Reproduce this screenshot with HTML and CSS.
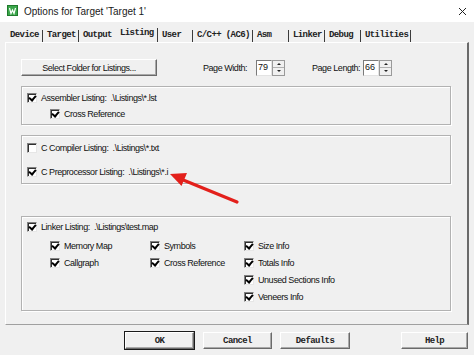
FILE: index.html
```html
<!DOCTYPE html>
<html>
<head>
<meta charset="utf-8">
<link rel="stylesheet" href="styles.css">
</head>
<body>
<div class="dialog">
  <div class="titlebar">
    <svg class="appicon" width="11" height="11" viewBox="0 0 11 11">
      <rect x="0" y="0" width="11" height="11" fill="#1f7a2c"/>
      <rect x="1" y="1" width="9" height="9" fill="#3aa64a"/>
      <polyline points="2.5,3 4,8.5 5.5,5 7,8.5 8.5,3" fill="none" stroke="#fff" stroke-width="1.2"/>
    </svg>
    <span class="title">Options for Target 'Target 1'</span>
    <svg class="close" width="9" height="9" viewBox="0 0 9 9">
      <path d="M1 1 L8 8 M8 1 L1 8" stroke="#222" stroke-width="1"/>
    </svg>
  </div>

  <div class="tabs">
    <span class="tab w-device">Device</span>
    <span class="tab w-target">Target</span>
    <span class="tab w-output nosep">Output</span>
    <span class="tab w-listing active">Listing</span>
    <span class="tab w-user">User</span>
    <span class="tab w-cc">C/C++ (AC6)</span>
    <span class="tab w-asm">Asm</span>
    <span class="tab w-linker">Linker</span>
    <span class="tab w-debug">Debug</span>
    <span class="tab w-util">Utilities</span>
  </div>

  <div class="panel">
    <div class="toprow">
      <button class="btn folder">Select Folder for Listings...</button>
      <span class="lbl lbl-pw">Page Width:</span>
      <div class="spin">
        <span class="field">79</span>
        <span class="spinbtns"><span class="sb"><i class="up"></i></span><span class="sb"><i class="down"></i></span></span>
      </div>
      <span class="lbl lbl-pl">Page Length:</span>
      <div class="spin">
        <span class="field">66</span>
        <span class="spinbtns"><span class="sb"><i class="up"></i></span><span class="sb"><i class="down"></i></span></span>
      </div>
    </div>

    <div class="group g1">
      <div class="cbrow"><span class="cb on"></span><span class="txt">Assembler Listing:  .\Listings\*.lst</span></div>
      <div class="cbrow sub"><span class="cb on"></span><span class="txt">Cross Reference</span></div>
    </div>

    <div class="group g2">
      <div class="cbrow"><span class="cb"></span><span class="txt">C Compiler Listing:  .\Listings\*.txt</span></div>
      <div class="cbrow"><span class="cb on"></span><span class="txt">C Preprocessor Listing:  .\Listings\*.i</span></div>
    </div>

    <div class="group g3">
      <div class="cbrow"><span class="cb on"></span><span class="txt">Linker Listing:  .\Listings\test.map</span></div>
      <div class="opts">
        <div class="cbrow"><span class="cb on"></span><span class="txt">Memory Map</span></div>
        <div class="cbrow"><span class="cb on"></span><span class="txt">Symbols</span></div>
        <div class="cbrow"><span class="cb on"></span><span class="txt">Size Info</span></div>
        <div class="cbrow"><span class="cb on"></span><span class="txt">Callgraph</span></div>
        <div class="cbrow"><span class="cb on"></span><span class="txt">Cross Reference</span></div>
        <div class="cbrow"><span class="cb on"></span><span class="txt">Totals Info</span></div>
        <div></div><div></div>
        <div class="cbrow"><span class="cb on"></span><span class="txt">Unused Sections Info</span></div>
        <div></div><div></div>
        <div class="cbrow"><span class="cb on"></span><span class="txt">Veneers Info</span></div>
      </div>
    </div>
  </div>

  <div class="buttons">
    <button class="btn mono ok">OK</button>
    <button class="btn mono cancel">Cancel</button>
    <button class="btn mono defaults">Defaults</button>
    <button class="btn mono help">Help</button>
  </div>

  <svg class="arrow" width="474" height="355" viewBox="0 0 474 355">
    <line x1="237" y1="202" x2="182" y2="179.5" stroke="#e3201b" stroke-width="3.2" stroke-linecap="round"/>
    <polygon points="170,174 187,173 181.5,186" fill="#e3201b"/>
  </svg>
</div>
</body>
</html>
```

FILE: styles.css
```css
html, body {
  margin: 0;
  padding: 0;
}
body {
  width: 474px;
  height: 355px;
  overflow: hidden;
  background: #f0f0f0;
}
.dialog {
  position: relative;
  width: 474px;
  height: 355px;
  background: #f0f0f0;
  font-family: "Liberation Sans", Arial, sans-serif;
  font-size: 9px;
  letter-spacing: -0.45px;
  color: #111;
}

/* title bar */
.titlebar {
  height: 22px;
  background: #fff;
  display: flex;
  align-items: center;
  padding-left: 7px;
  box-sizing: border-box;
}
.appicon { flex: none; margin-top: -1px; }
.title {
  margin-left: 6px;
  font-size: 10px;
  letter-spacing: 0;
  color: #1a1a1a;
}
.close {
  margin-left: auto;
  margin-right: 7px;
}

/* tabs */
.tabs {
  height: 20px;
  display: flex;
  align-items: flex-end;
  padding-left: 6px;
  box-sizing: border-box;
}
.tab {
  box-sizing: border-box;
  height: 12px;
  line-height: 11px;
  padding-left: 4px;
  border-right: 1px solid #3c3c3c;
  margin-bottom: 0;
  font-family: "Liberation Mono", "Courier New", monospace;
  font-size: 9px;
  letter-spacing: -0.6px;
  font-weight: bold;
  color: #222;
  white-space: pre;
}
.tab.nosep { border-right-color: transparent; }
.tab.active {
  height: 14px;
  line-height: 11px;
  padding-bottom: 3px;
}
.w-device { width: 37px; }
.w-target { width: 36px; }
.w-output { width: 37px; }
.w-listing { width: 42px; }
.w-user { width: 35px; }
.w-cc { width: 60px; }
.w-asm { width: 36px; }
.w-linker { width: 36px; }
.w-debug { width: 36px; }
.w-util { width: 50px; }

/* panel */
.panel {
  box-sizing: border-box;
  margin-left: 5px;
  width: 464px;
  height: 283px;
  border-top: 1px solid #fff;
  border-left: 1px solid #fff;
  border-right: 2px solid #6a6a6a;
  border-bottom: 1px solid #a0a0a0;
  padding: 16px 0 0 15px;
}

.toprow {
  display: flex;
  align-items: center;
  height: 17px;
}
.btn {
  box-sizing: border-box;
  background: #f0f0f0;
  border-top: 1px solid #fff;
  border-left: 1px solid #fff;
  border-right: 1px solid #6a6a6a;
  border-bottom: 1px solid #6a6a6a;
  box-shadow: inset -1px -1px 0 #a9a9a9;
  padding: 0;
  margin: 0;
  font: inherit;
  color: #111;
}
.folder {
  width: 136px;
  height: 17px;
  font-size: 9px;
  letter-spacing: -0.45px;
}
.lbl { white-space: pre; }
.lbl-pw { margin-left: 46px; width: 53px; }
.lbl-pl { margin-left: 27px; width: 51px; }

.spin {
  display: flex;
  height: 16px;
}
.field {
  box-sizing: border-box;
  width: 16px;
  height: 16px;
  background: #fff;
  border-top: 1px solid #7a7a7a;
  border-left: 1px solid #7a7a7a;
  border-right: 1px solid #e3e3e3;
  border-bottom: 1px solid #e3e3e3;
  line-height: 13px;
  padding-left: 1px;
  letter-spacing: 0;
}
.spinbtns {
  display: flex;
  flex-direction: column;
  width: 13px;
  height: 16px;
  box-sizing: border-box;
  border: 1px solid #9a9a9a;
  background: #f0f0f0;
}
.sb {
  flex: 1;
  display: flex;
  align-items: center;
  justify-content: center;
}
.sb + .sb { border-top: 1px solid #b0b0b0; }
.sb i {
  display: block;
  width: 0;
  height: 0;
  border-left: 2px solid transparent;
  border-right: 2px solid transparent;
}
.sb i.up { border-bottom: 2px solid #222; }
.sb i.down { border-top: 2px solid #222; }

/* groups */
.group {
  box-sizing: border-box;
  width: 430px;
  border: 1px solid #b2b2b2;
  box-shadow: 1px 1px 0 #fff, inset 1px 1px 0 #fff;
  padding-left: 5px;
}
.g1 {
  margin-top: 10px;
  height: 39px;
  padding-top: 3px;
}
.g2 {
  margin-top: 10px;
  height: 49px;
  padding-top: 4px;
  display: flex;
  flex-direction: column;
  gap: 8px;
}
.g3 {
  margin-top: 32px;
  height: 95px;
  padding-top: 2px;
}
.cbrow {
  display: flex;
  align-items: center;
  height: 16px;
  white-space: pre;
}
.cbrow.sub { padding-left: 23px; }
.cb {
  box-sizing: border-box;
  flex: none;
  width: 10px;
  height: 10px;
  margin-right: 4px;
  background: #fff;
  border-top: 1px solid #808080;
  border-left: 1px solid #808080;
  border-right: 1px solid #e6e6e6;
  border-bottom: 1px solid #e6e6e6;
  box-shadow: inset 1px 1px 0 #303030;
  position: relative;
}
.cb.on::after {
  content: "";
  position: absolute;
  left: 1px;
  top: 0px;
  width: 5px;
  height: 3px;
  border-left: 2px solid #000;
  border-bottom: 2px solid #000;
  transform: rotate(-50deg);
  transform-origin: center;
  top: 1px;
}
.opts {
  margin-top: 2px;
  padding-left: 23px;
  display: grid;
  grid-template-columns: 100px 94px 1fr;
  grid-auto-rows: 17px;
}
.opts .cbrow { height: 17px; }

/* bottom buttons */
.buttons {
  display: flex;
  padding-left: 125px;
  margin-top: 7px;
  gap: 8px;
}
.mono {
  height: 17px;
  font-family: "Liberation Mono", "Courier New", monospace;
  font-size: 9px;
  letter-spacing: -0.6px;
  font-weight: bold;
  color: #222;
}
.ok { width: 69px; outline: 1px solid #1a1a1a; }
.cancel { width: 69px; margin-left: 1px; }
.defaults { width: 70px; }
.help { width: 67px; margin-left: 43px; }

.arrow {
  position: absolute;
  left: 0;
  top: 0;
  pointer-events: none;
}
```
